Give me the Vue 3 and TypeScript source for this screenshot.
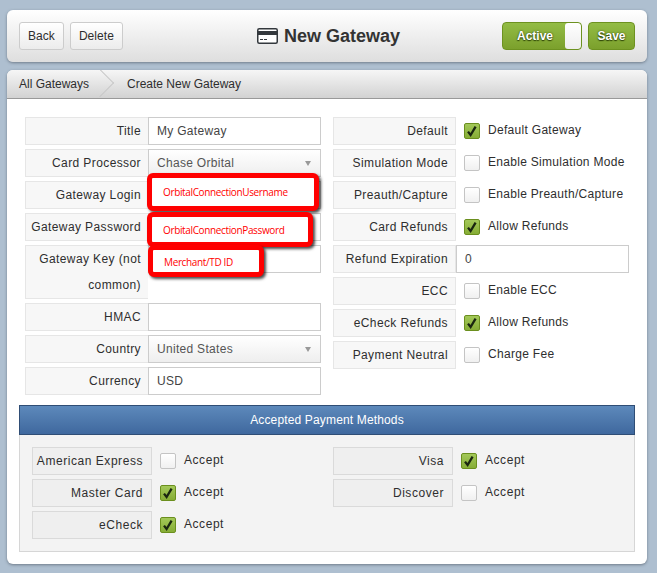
<script setup lang="ts">
interface Row { label: string; kind: 'input' | 'select' | 'check'; value?: string; checked?: boolean; tall?: boolean }
const leftRows: Row[] = [
  { label: 'Title', kind: 'input', value: 'My Gateway' },
  { label: 'Card Processor', kind: 'select', value: 'Chase Orbital' },
  { label: 'Gateway Login', kind: 'input', value: '' },
  { label: 'Gateway Password', kind: 'input', value: '' },
  { label: 'Gateway Key (not common)', kind: 'input', value: '', tall: true },
  { label: 'HMAC', kind: 'input', value: '' },
  { label: 'Country', kind: 'select', value: 'United States' },
  { label: 'Currency', kind: 'input', value: 'USD' },
]
const rightRows: Row[] = [
  { label: 'Default', kind: 'check', value: 'Default Gateway', checked: true },
  { label: 'Simulation Mode', kind: 'check', value: 'Enable Simulation Mode' },
  { label: 'Preauth/Capture', kind: 'check', value: 'Enable Preauth/Capture' },
  { label: 'Card Refunds', kind: 'check', value: 'Allow Refunds', checked: true },
  { label: 'Refund Expiration', kind: 'input', value: '0' },
  { label: 'ECC', kind: 'check', value: 'Enable ECC' },
  { label: 'eCheck Refunds', kind: 'check', value: 'Allow Refunds', checked: true },
  { label: 'Payment Neutral', kind: 'check', value: 'Charge Fee' },
]
const payLeft = [
  { label: 'American Express', checked: false },
  { label: 'Master Card', checked: true },
  { label: 'eCheck', checked: true },
]
const payRight = [
  { label: 'Visa', checked: true },
  { label: 'Discover', checked: false },
]
const notes = [
  { cls: 'n1', text: 'OrbitalConnectionUsername' },
  { cls: 'n2', text: 'OrbitalConnectionPassword' },
  { cls: 'n3', text: 'Merchant/TD ID' },
]
</script>

<template>
  <div class="page">
    <header class="card top">
      <div class="btns">
        <button class="btn">Back</button>
        <button class="btn">Delete</button>
      </div>
      <h1 class="title">
        <svg class="ico" width="21" height="16" viewBox="0 0 21 16">
          <rect x="0.75" y="0.75" width="19.5" height="14.5" rx="1.5" fill="#fff" stroke="#33383d" stroke-width="1.5" />
          <rect x="1" y="3" width="19" height="4" fill="#33383d" />
          <rect x="3" y="11" width="3" height="1" fill="#33383d" />
          <rect x="7" y="11" width="3" height="1" fill="#33383d" />
        </svg>
        New Gateway
      </h1>
      <div class="acts">
        <div class="toggle"><span class="tlabel">Active</span><span class="knob"></span></div>
        <button class="save">Save</button>
      </div>
    </header>

    <main class="card body">
      <nav class="crumbs">
        <span class="crumb first">All Gateways</span>
        <span class="crumb">Create New Gateway</span>
      </nav>

      <div class="form">
        <div class="col left">
          <div v-for="r in leftRows" :key="r.label" class="row" :class="{ tall: r.tall }">
            <label class="lab">{{ r.label }}</label>
            <div v-if="r.kind === 'select'" class="field sel">{{ r.value }}<i class="caret"></i></div>
            <div v-else class="field">{{ r.value }}</div>
          </div>
        </div>
        <div class="col right">
          <div v-for="r in rightRows" :key="r.label" class="row">
            <label class="lab">{{ r.label }}</label>
            <div v-if="r.kind === 'input'" class="field">{{ r.value }}</div>
            <div v-else class="chk">
              <span class="box" :class="{ on: r.checked }">
                <svg v-if="r.checked" width="14" height="14" viewBox="0 0 14 14"><path d="M3 7.6 5.6 11 10.6 2.6" fill="none" stroke="#1a2610" stroke-width="2.3" /></svg>
              </span>
              <span class="ct">{{ r.value }}</span>
            </div>
          </div>
        </div>
      </div>

      <section class="pay">
        <div class="payhead">Accepted Payment Methods</div>
        <div class="paybody">
          <div class="paycol pl">
            <div v-for="p in payLeft" :key="p.label" class="row">
              <label class="lab plab">{{ p.label }}</label>
              <div class="chk">
                <span class="box" :class="{ on: p.checked }">
                  <svg v-if="p.checked" width="14" height="14" viewBox="0 0 14 14"><path d="M3 7.6 5.6 11 10.6 2.6" fill="none" stroke="#1a2610" stroke-width="2.3" /></svg>
                </span>
                <span class="ct pt">Accept</span>
              </div>
            </div>
          </div>
          <div class="paycol pr">
            <div v-for="p in payRight" :key="p.label" class="row">
              <label class="lab plab">{{ p.label }}</label>
              <div class="chk">
                <span class="box" :class="{ on: p.checked }">
                  <svg v-if="p.checked" width="14" height="14" viewBox="0 0 14 14"><path d="M3 7.6 5.6 11 10.6 2.6" fill="none" stroke="#1a2610" stroke-width="2.3" /></svg>
                </span>
                <span class="ct pt">Accept</span>
              </div>
            </div>
          </div>
        </div>
      </section>
    </main>

    <div v-for="n in notes" :key="n.cls" class="note" :class="n.cls">{{ n.text }}</div>
  </div>
</template>

<style>
html, body { margin: 0; background: #aebfd0; }
</style>

<style scoped>
.page {
  position: relative;
  width: 657px;
  height: 573px;
  box-sizing: border-box;
  padding: 10px 10px 0 7px;
  background: #aebfd0;
  font-family: "Liberation Sans", Arial, sans-serif;
  font-size: 12px;
  letter-spacing: 0.3px;
  color: #2e2e2e;
  overflow: hidden;
}
.card {
  border-radius: 6px;
  box-shadow: 0 1px 3px rgba(60, 70, 80, 0.55);
}
.top {
  height: 52px;
  box-sizing: border-box;
  padding: 12px 12px;
  display: flex;
  align-items: flex-start;
  justify-content: space-between;
  background: linear-gradient(#fff, #dedede);
  position: relative;
}
.btns { display: flex; gap: 6px; }
.btn {
  height: 28px;
  box-sizing: border-box;
  padding: 0 8px;
  border: 1px solid #ccc;
  border-radius: 3px;
  background: linear-gradient(#fff, #ececec);
  font: inherit;
  letter-spacing: 0.05px;
  color: #2e2e2e;
}
.title {
  position: absolute;
  left: 250px;
  top: 14px;
  margin: 0;
  display: flex;
  align-items: center;
  gap: 6px;
  font-size: 18px;
  line-height: 24px;
  font-weight: 700;
  letter-spacing: 0;
  color: #333;
}
.acts { display: flex; gap: 6px; }
.toggle {
  width: 80px;
  height: 28px;
  box-sizing: border-box;
  border: 1px solid #6d9220;
  border-radius: 4px;
  background: linear-gradient(#93bc45, #7ba02c);
  display: flex;
  justify-content: space-between;
  overflow: hidden;
}
.tlabel, .save {
  color: #fff;
  font-weight: 700;
  letter-spacing: 0;
  text-shadow: 0 0 2px #2f4508, 0 1px 1px #2f4508;
}
.tlabel { width: 62px; text-align: center; line-height: 26px; padding-left: 2px; box-sizing: border-box; }
.knob { width: 16px; background: linear-gradient(#fff, #eee); border-radius: 3px; }
.save {
  width: 47px;
  height: 28px;
  box-sizing: border-box;
  border: 1px solid #6d9220;
  border-radius: 4px;
  background: linear-gradient(#93bc45, #7ba02c);
  font: inherit;
  font-weight: 700;
  padding: 0;
}
.body {
  margin-top: 8px;
  height: 494px;
  background: #fff;
  overflow: hidden;
}
.crumbs {
  height: 29px;
  box-sizing: border-box;
  display: flex;
  align-items: center;
  border-bottom: 1px solid #999;
  background: linear-gradient(#f6f6f6, #d2d2d2);
  letter-spacing: 0;
}
.crumb { padding-left: 12px; line-height: 28px; }
.first {
  position: relative;
  width: 96px;
  box-sizing: border-box;
  margin-right: 12px;
}
.first::after {
  content: "";
  position: absolute;
  right: -7px;
  top: 3px;
  width: 19px;
  height: 19px;
  transform: rotate(45deg);
  border-top: 1px solid #c8c8c8;
  border-right: 1px solid #c8c8c8;
}
.form {
  display: flex;
  padding: 18px 18px 0;
  gap: 12px;
}
.col { display: flex; flex-direction: column; gap: 4px; }
.left { width: 296px; }
.right { width: 296px; }
.row { display: flex; height: 28px; }
.row.tall { height: 54px; }
.lab {
  width: 123px;
  flex: none;
  box-sizing: border-box;
  border: 1px solid #e6e6e6;
  background: #f7f7f7;
  text-align: right;
  padding: 0 7px 0 2px;
  line-height: 26px;
  white-space: normal;
  letter-spacing: 0.4px;
}
.left .lab { border-right: 0; }
.field {
  width: 173px;
  flex: none;
  height: 28px;
  box-sizing: border-box;
  border: 1px solid #ccc;
  background: #fff;
  padding-left: 8px;
  line-height: 26px;
  color: #444;
}
.sel {
  position: relative;
  background: linear-gradient(#fff, #eee);
  color: #555;
}
.caret {
  position: absolute;
  right: 9px;
  top: 11px;
  border: 3.5px solid transparent;
  border-top: 5px solid #999;
  border-bottom: 0;
}
.chk { display: flex; align-items: center; padding-left: 8px; height: 28px; }
.box {
  width: 16px;
  height: 16px;
  box-sizing: border-box;
  flex: none;
  border: 1px solid #c4c4c4;
  border-radius: 2px;
  background: linear-gradient(#fff, #f0f0f0);
  display: flex;
  align-items: center;
  justify-content: center;
}
.box.on {
  border-color: #6b8f1e;
  background: linear-gradient(#a3c859, #86ad36);
}
.ct { margin-left: 8px; position: relative; top: -1px; }
.pt { letter-spacing: 0.55px; }
.pay {
  margin: 0 12px;
  margin-top: 10px;
}
.payhead {
  height: 30px;
  box-sizing: border-box;
  border: 1px solid #2f4d75;
  background: linear-gradient(#5d89bb, #3f689e);
  color: #fff;
  text-align: center;
  line-height: 28px;
  letter-spacing: 0.15px;
}
.paybody {
  height: 117px;
  box-sizing: border-box;
  border: 1px solid #d6d6d6;
  border-top: 0;
  background: #f3f3f3;
  display: flex;
  padding: 12px 12px 0;
}
.paycol { display: flex; flex-direction: column; gap: 4px; }
.pl { width: 301px; }
.plab {
  width: 120px;
  background: #efefef;
  border: 1px solid #dadada;
  padding: 0 8px 0 2px;
  letter-spacing: 0.55px;
}
.note {
  position: absolute;
  box-sizing: border-box;
  background: #fff;
  border: 5px solid #f00;
  border-radius: 6px;
  box-shadow: 2px 2px 3px rgba(0, 0, 0, 0.7);
  color: #f00;
  font-size: 10px;
  letter-spacing: -0.36px;
  font-family: "Open Sans", "Liberation Sans", sans-serif;
  padding-left: 11px;
  white-space: nowrap;
}
.n1 { left: 147px; top: 173px; width: 172px; height: 38px; line-height: 29px; }
.n2 { left: 147px; top: 212px; width: 166px; height: 35px; line-height: 26px; }
.n3 { left: 148px; top: 245px; width: 116px; height: 32px; line-height: 25px; padding-left: 11px; }
</style>
